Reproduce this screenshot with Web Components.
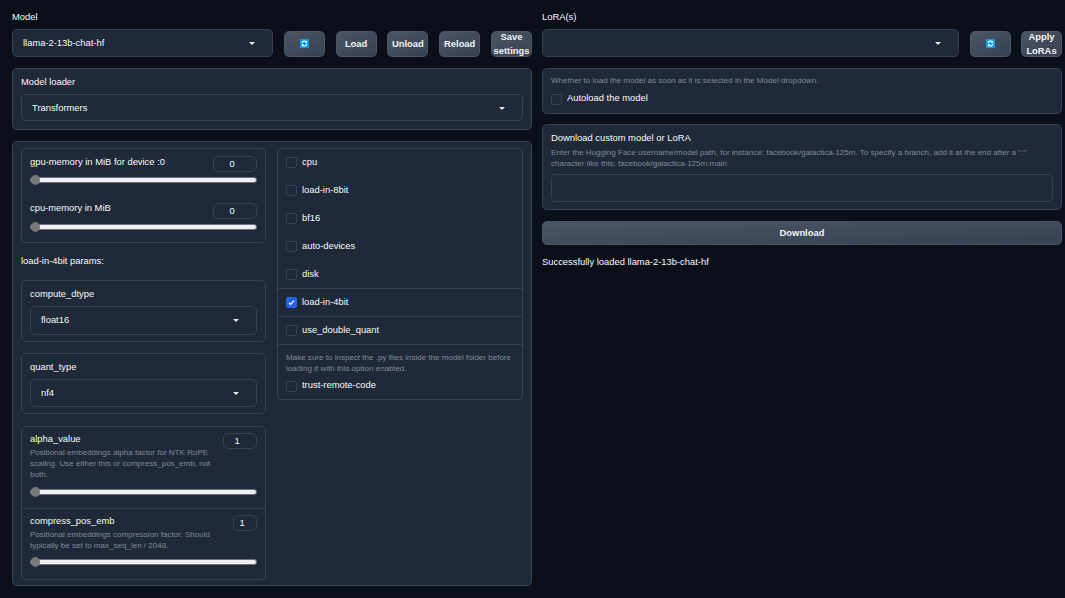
<!DOCTYPE html>
<html>
<head>
<meta charset="utf-8">
<title>Model</title>
<style>
html, body { margin: 0; height: 100%; background: #0b0f19; overflow: hidden; }
body { font: 9.38px/14px "Liberation Sans", Arial, sans-serif; color: #f9fafb; }
</style>
</head>
<body>
<model-page></model-page>

<script>
// small helper so every component below stays a few lines
function define(tag, css, html) {
  customElements.define(tag, class extends HTMLElement {
    constructor() {
      super();
      this._shadowRoot = this.attachShadow({ mode: 'open' });
    }
    connectedCallback() {
      if (this._shadowRoot.innerHTML) return;
      this._shadowRoot.innerHTML = `<style>${css}</style>${typeof html === 'function' ? html(this) : html}`;
    }
  });
}

const refreshIcon = `
<svg width="9" height="9" viewBox="0 0 9 9">
  <rect width="9" height="9" fill="#0a9be6"/>
  <path d="M2 4.2A2.5 2.5 0 0 1 6.3 2.8M7 4.8A2.5 2.5 0 0 1 2.7 6.2" fill="none" stroke="#fff" stroke-width="1.1"/>
  <path d="M7.2 1.3v2.4H4.8zM1.8 7.7V5.3h2.4z" fill="#fff"/>
</svg>`;

define('ui-panel', `
  :host { display: block; background: #1f2937; border: 1px solid #374151; border-radius: 5px; box-sizing: border-box; }
  :host([pad]) { padding: 6px 8px; }
`, `<slot></slot>`);

define('ui-dropdown', `
  :host { display: flex; align-items: center; justify-content: space-between; box-sizing: border-box; height: var(--drop-h, 28px);
    padding: 0 17px var(--drop-pb, 0) 10px; background: #1f2937; border: 1px solid #374151; border-radius: 5px; }
  i { width: 0; height: 0; border: 3px solid transparent; border-top: 3px solid #e5e7eb; border-bottom: 0; margin-top: 1px; }
`, `<span><slot></slot></span><i></i>`);

define('ui-button', `
  :host { display: flex; align-items: center; justify-content: center; box-sizing: border-box; height: 26px; padding-bottom: 1px; text-align: center;
    font-weight: 700; line-height: 14px; color: #f3f4f6;
    background: linear-gradient(to bottom right, #4b5563, #374151); border: 1px solid #4b5563; border-radius: 5px; }
  ::slotted(svg) { display: block; margin-top: -1px; }
`, `<slot></slot>`);

define('ui-field-label', `
  :host { display: block; line-height: 14px; }
`, `<slot></slot>`);

define('ui-info', `
  :host { display: block; font-size: 8.04px; line-height: 11px; color: #7f8b9b; }
`, `<slot></slot>`);

define('ui-number', `
  :host { display: flex; align-items: center; justify-content: center; box-sizing: border-box; height: 16px; padding-right: 6px;
    background: #1f2937; border: 1px solid #374151; border-radius: 5px; }
`, `<slot></slot>`);

define('ui-slider', `
  :host { display: block; }
  input { display: block; width: 100%; height: 10px; margin: 0; background: transparent; -webkit-appearance: none; appearance: none; }
  input::-webkit-slider-runnable-track { height: 6px; background: #f0f0f0; border: 1px solid #6b7280; border-radius: 3px; box-sizing: border-box; }
  input::-webkit-slider-thumb { -webkit-appearance: none; width: 9px; height: 10px; margin-top: -3px; border-radius: 50%; background: #787878; }
`, `<input type="range" min="0" max="100" value="0" tabindex="-1">`);

// label + number on one line, optional help text, slider under it
define('ui-range', `
  :host { display: block; }
  .top { display: flex; justify-content: space-between; align-items: flex-start; }
  ui-number { width: var(--num, 44px); }
  .side { flex: 1; max-width: 186px; margin-top: var(--label-shift, -1px); }
  ui-slider { margin-top: var(--slider-gap, 3px); }
  ::slotted(ui-info) { margin-top: 1px; }
`, el => `
  <div class="top">
    <div class="side"><ui-field-label>${el.getAttribute('label')}</ui-field-label><slot></slot></div>
    <ui-number>${el.getAttribute('value')}</ui-number>
  </div>
  <ui-slider></ui-slider>
`);

define('ui-check', `
  :host { display: flex; align-items: flex-start; gap: 5px; line-height: 14px; }
  b { box-sizing: border-box; width: 11px; height: 11px; flex: none; margin-top: var(--box-top, 3px); background: #1f2937; border: 1px solid #374151; border-radius: 2px;
    display: flex; align-items: center; justify-content: center; }
  :host([checked]) b { background: #2563eb; border-color: #2563eb; }
  svg { display: none; }
  :host([checked]) svg { display: block; }
`, `<b><svg width="7" height="7" viewBox="0 0 7 7"><path d="M1 3.8l1.6 1.6L6 1.6" fill="none" stroke="#fff" stroke-width="1.3"/></svg></b><span><slot></slot></span>`);

define('ui-select-box', `
  :host { display: block; box-sizing: border-box; padding: 6px 8px 0; border: 1px solid #374151; border-radius: 5px; }
  ui-dropdown { margin-top: 5px; }
`, el => `<ui-field-label>${el.getAttribute('label')}</ui-field-label><ui-dropdown>${el.getAttribute('value')}</ui-dropdown>`);

define('top-row', `
  :host { display: grid; grid-template-columns: var(--cols); column-gap: var(--gap); align-items: end; }
`, `<slot></slot>`);

define('model-page', `
  :host { display: grid; grid-template-columns: 520px 520px; column-gap: 10px; padding: 10px 3px 0 12px; }
  .label { height: 19px; }
  .col { display: flex; flex-direction: column; }
  .loader { margin-top: 11px; height: 62px; --drop-h: 27px; }
  .loader ui-dropdown { margin-top: 5px; }
  .main { margin-top: 11px; height: 445px; display: grid; grid-template-columns: 245px 246px; column-gap: 11px; padding: 6px 8px 0; }
  .lc { display: flex; flex-direction: column; }
  .box { border: 1px solid #374151; border-radius: 5px; }
  .sliders { box-sizing: border-box; height: 95px; padding: 7px 8px 0; }
  .sliders ui-range + ui-range { margin-top: 18px; --label-shift: -2px; }
  .sec { margin: 11px 0 12px; line-height: 14px; height: 14px; }
  .dtype { height: 62px; --drop-h: 29px; --drop-pb: 1px; }
  .quant { height: 61px; margin-top: 11px; }
  .scale { box-sizing: border-box; height: 154px; margin-top: 12px; }
  .scale ui-range { height: 81px; box-sizing: border-box; padding: 6px 8px 0; --num: 34px; --slider-gap: 7px; }
  .scale ui-range + ui-range { height: 72px; padding-top: 6px; border-top: 1px solid #374151; --num: 24px; --slider-gap: 6px; }
  .list { box-sizing: border-box; height: 252px; }
  .row { box-sizing: border-box; height: 28px; padding: 6px 8px 0; --box-top: 2px; }
  .row.short { height: 27px; }
  .row.sep { border-top: 1px solid #374151; }
  .trust { border-top: 1px solid #374151; padding: 7px 8px 0; }
  .trust ui-check { margin-top: 4px; }
  .auto { margin-top: 11px; height: 46px; }
  .auto ui-check { margin-top: 5px; }
  .dl { margin-top: 10px; height: 86px; }
  .dl ui-info { margin-top: 2px; }
  .text { box-sizing: border-box; height: 28px; margin-top: 5px; border: 1px solid #374151; border-radius: 5px; }
  .wide { margin-top: 11px; height: 24px; }
  .status { margin-top: 10px; }
`, `
  <div class="col">
    <div class="label"><ui-field-label>Model</ui-field-label></div>
    <top-row style="--cols: 261px 41px 41px 41px 41px 41px; --gap: 10.8px">
      <ui-dropdown>llama-2-13b-chat-hf</ui-dropdown>
      <ui-button>${refreshIcon}</ui-button>
      <ui-button>Load</ui-button>
      <ui-button>Unload</ui-button>
      <ui-button>Reload</ui-button>
      <ui-button>Save settings</ui-button>
    </top-row>
    <ui-panel class="loader" pad>
      <ui-field-label>Model loader</ui-field-label>
      <ui-dropdown>Transformers</ui-dropdown>
    </ui-panel>
    <ui-panel class="main">
      <div class="lc">
        <div class="box sliders">
          <ui-range label="gpu-memory in MiB for device :0" value="0"></ui-range>
          <ui-range label="cpu-memory in MiB" value="0"></ui-range>
        </div>
        <div class="sec">load-in-4bit params:</div>
        <ui-select-box class="dtype" label="compute_dtype" value="float16"></ui-select-box>
        <ui-select-box class="quant" label="quant_type" value="nf4"></ui-select-box>
        <div class="box scale">
          <ui-range label="alpha_value" value="1"><ui-info>Positional embeddings alpha factor for NTK RoPE scaling. Use either this or compress_pos_emb, not both.</ui-info></ui-range>
          <ui-range label="compress_pos_emb" value="1"><ui-info>Positional embeddings compression factor. Should typically be set to max_seq_len / 2048.</ui-info></ui-range>
        </div>
      </div>
      <div class="box list">
        <div class="row"><ui-check>cpu</ui-check></div>
        <div class="row"><ui-check>load-in-8bit</ui-check></div>
        <div class="row"><ui-check>bf16</ui-check></div>
        <div class="row"><ui-check>auto-devices</ui-check></div>
        <div class="row short"><ui-check>disk</ui-check></div>
        <div class="row sep"><ui-check checked>load-in-4bit</ui-check></div>
        <div class="row sep"><ui-check>use_double_quant</ui-check></div>
        <div class="trust">
          <ui-info>Make sure to inspect the .py files inside the model folder before loading it with this option enabled.</ui-info>
          <ui-check>trust-remote-code</ui-check>
        </div>
      </div>
    </ui-panel>
  </div>
  <div class="col">
    <div class="label"><ui-field-label>LoRA(s)</ui-field-label></div>
    <top-row style="--cols: 417px 41px 41px; --gap: 10.5px">
      <ui-dropdown>&nbsp;</ui-dropdown>
      <ui-button>${refreshIcon}</ui-button>
      <ui-button>Apply LoRAs</ui-button>
    </top-row>
    <ui-panel class="auto" pad>
      <ui-info>Whether to load the model as soon as it is selected in the Model dropdown.</ui-info>
      <ui-check>Autoload the model</ui-check>
    </ui-panel>
    <ui-panel class="dl" pad>
      <ui-field-label>Download custom model or LoRA</ui-field-label>
      <ui-info>Enter the Hugging Face username/model path, for instance: facebook/galactica-125m. To specify a branch, add it at the end after a ":" character like this: facebook/galactica-125m:main</ui-info>
      <div class="text"></div>
    </ui-panel>
    <ui-button class="wide">Download</ui-button>
    <div class="status">Successfully loaded llama-2-13b-chat-hf</div>
  </div>
`);
</script>
</body>
</html>
